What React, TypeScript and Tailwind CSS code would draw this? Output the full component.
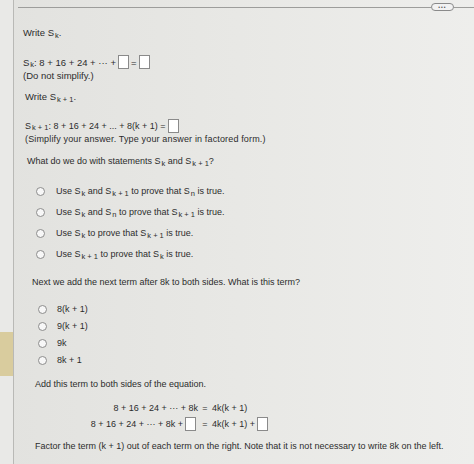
import React from 'react';

const Sub = ({ children }: { children: React.ReactNode }) => (
  <sub className="text-[7.5px] ml-[1px]">{children}</sub>
);

const Box = () => (
  <span className="inline-block align-middle w-[11px] h-[14px] bg-white border border-[#8a8a8a] mx-[2px]" />
);

const Radio = ({ children }: { children: React.ReactNode }) => (
  <div className="flex items-center h-[21px]">
    <span className="w-[9px] h-[9px] rounded-full border border-[#8c8c8c] bg-[#f7f7f7] shrink-0" />
    <span className="ml-[11px]">{children}</span>
  </div>
);

const SmallRadio = ({ children }: { children: React.ReactNode }) => (
  <div className="flex items-center h-[17px]">
    <span className="w-[9px] h-[9px] rounded-full border border-[#8c8c8c] bg-[#f7f7f7] shrink-0" />
    <span className="ml-[10px]">{children}</span>
  </div>
);

function App() {
  return (
    <div
      className="w-[474px] h-[464px] overflow-hidden flex bg-gradient-to-r from-[#e2e2df] via-[#e8e8e5] to-[#eeeeec] text-[#2c2c2c] text-[9px] leading-[13px]"
      style={{ fontFamily: '"Liberation Sans", Arial, sans-serif' }}
    >
      {/* left frame strip */}
      <div className="w-[14px] shrink-0 border-r border-[#b9b9b6] bg-[#e9e9e7] flex flex-col">
        <div className="h-[332px]" />
        <div className="h-[44px] bg-[#d9cc9e]" />
      </div>

      <div className="flex-1 flex flex-col">
        {/* top rule with more button */}
        <div className="flex items-center h-[14px] pl-[4px]">
          <div className="flex-1 h-px bg-[#9d9d9b]" />
          <div className="w-[23px] h-[8px] rounded-full border border-[#8a8a8a] bg-[#f2f2f2] flex items-center justify-center text-[5px] leading-none tracking-[1px] text-[#555]">
            •••
          </div>
          <div className="w-[20px] h-px bg-[#9d9d9b]" />
        </div>

        <div className="pl-[9px] mt-[12px] text-[9.5px]">
          <div>
            Write S<Sub>k</Sub>.
          </div>
          <div className="mt-[16px] flex items-center h-[14px]">
            <span>
              S<Sub>k</Sub>: 8 + 16 + 24 + ··· +
            </span>
            <Box />
            <span>=</span>
            <Box />
          </div>
          <div>(Do not simplify.)</div>
        </div>

        <div className="pl-[11px] mt-[8px]">
          <div className="text-[9.5px]">
            Write S<Sub>k + 1</Sub>.
          </div>
          <div className="mt-[16px] flex items-center h-[14px]">
            <span>
              S<Sub>k + 1</Sub>: 8 + 16 + 24 + ... + 8(k + 1) =
            </span>
            <Box />
          </div>
          <div className="tracking-[0.15px]">(Simplify your answer. Type your answer in factored form.)</div>
        </div>

        <div className="pl-[13px] mt-[9px]">
          <div>
            What do we do with statements S<Sub>k</Sub> and S<Sub>k + 1</Sub>?
          </div>
          <div className="pl-[9px] mt-[13px]">
            <Radio>
              Use S<Sub>k</Sub> and S<Sub>k + 1</Sub> to prove that S<Sub>n</Sub> is true.
            </Radio>
            <Radio>
              Use S<Sub>k</Sub> and S<Sub>n</Sub> to prove that S<Sub>k + 1</Sub> is true.
            </Radio>
            <Radio>
              Use S<Sub>k</Sub> to prove that S<Sub>k + 1</Sub> is true.
            </Radio>
            <Radio>
              Use S<Sub>k + 1</Sub> to prove that S<Sub>k</Sub> is true.
            </Radio>
          </div>
        </div>

        <div className="pl-[18px] mt-[11px]">
          <div>Next we add the next term after 8k to both sides. What is this term?</div>
          <div className="pl-[6px] mt-[12px]">
            <SmallRadio>8(k + 1)</SmallRadio>
            <SmallRadio>9(k + 1)</SmallRadio>
            <SmallRadio>9k</SmallRadio>
            <SmallRadio>8k + 1</SmallRadio>
          </div>
        </div>

        <div className="pl-[21px] mt-[9px]">
          <div>Add this term to both sides of the equation.</div>
          <div className="mt-[11px] grid grid-cols-[163px_14px_auto] items-center">
            <div className="text-right">8 + 16 + 24 + ··· + 8k</div>
            <div className="text-center">=</div>
            <div>4k(k + 1)</div>
            <div className="text-right flex items-center justify-end h-[18px]">
              8 + 16 + 24 + ··· + 8k +<Box />
            </div>
            <div className="text-center">=</div>
            <div className="flex items-center">
              4k(k + 1) +<Box />
            </div>
          </div>
          <div className="mt-[7px]">
            Factor the term (k + 1) out of each term on the right. Note that it is not necessary to write 8k on the left.
          </div>
        </div>
      </div>
    </div>
  );
}

export default App;
